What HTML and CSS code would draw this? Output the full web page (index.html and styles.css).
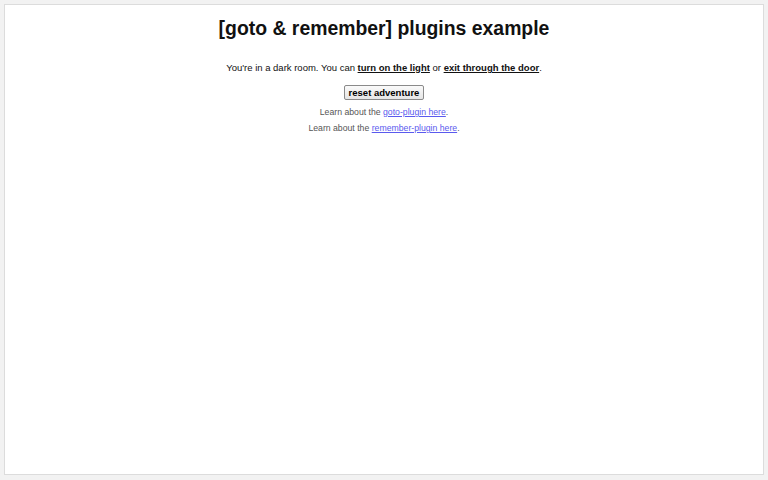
FILE: index.html
```html
<!DOCTYPE html>
<html lang="en">
<head>
    <meta charset="UTF-8">
    <title>[goto &amp; remember] plugins example</title>
    <link rel="stylesheet" href="styles.css">
</head>
<body>
    <div class="page">
        <h1>[goto &amp; remember] plugins example</h1>

        <p class="story">You're in a dark room. You can <a href="#">turn on the light</a> or <a href="#">exit through the door</a>.</p>

        <button class="reset">reset adventure</button>

        <p class="note">Learn about the <a href="#">goto-plugin here</a>.</p>
        <p class="note">Learn about the <a href="#">remember-plugin here</a>.</p>
    </div>
</body>
</html>
```

FILE: styles.css
```css
html, body {
    height: 100%;
}
body {
    margin: 0;
    padding: 4px 4px 5px 4px;
    box-sizing: border-box;
    background: #f2f2f2;
    font-family: "Liberation Sans", Arial, sans-serif;
}
.page {
    height: 100%;
    box-sizing: border-box;
    background: #fff;
    border: 1px solid #dcdcdc;
    text-align: center;
    padding-top: 12px;
}
h1 {
    margin: 0 0 23px;
    font-size: 19.4px;
    line-height: 22px;
    font-weight: bold;
    color: #111;
}
.story {
    margin: 0 0 12px;
    font-size: 9.5px;
    line-height: 11px;
    color: #111;
}
.story a {
    color: #111;
    font-weight: bold;
}
.reset {
    display: block;
    margin: 0 auto 7px;
    height: 15px;
    font-family: "Liberation Sans", Arial, sans-serif;
    font-size: 9.5px;
    line-height: 11px;
    font-weight: bold;
    padding: 0 4px;
    background: linear-gradient(#fafafa, #e6e6e6);
    border: 1px solid #8a8a8a;
    border-radius: 2px;
    color: #000;
}
.note {
    margin: 0 0 6px;
    font-size: 8.7px;
    line-height: 10px;
    color: #555;
}
.note a {
    color: #5a5aee;
}
```
